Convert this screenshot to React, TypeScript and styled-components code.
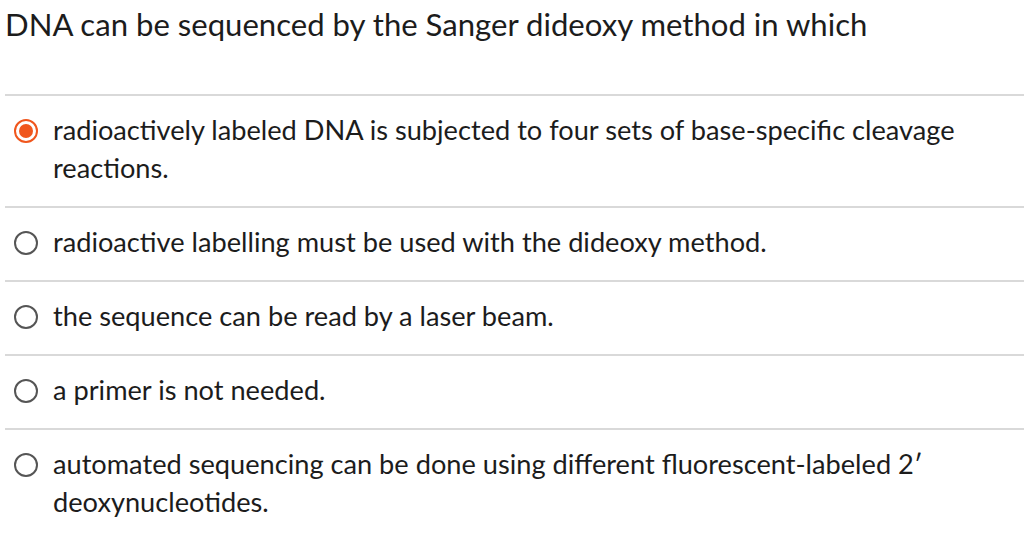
import React from "react";
import styled, { createGlobalStyle } from "styled-components";

const Global = createGlobalStyle`
  html, body { margin: 0; padding: 0; background: #ffffff; }
  body { font-family: Lato, "Open Sans", sans-serif; color: #1c1c1c; }
`;

const Page = styled.div`
  width: 1024px;
  height: 560px;
  overflow: hidden;
  background: #fff;
`;

const Question = styled.h1`
  margin: 0;
  padding: 4px 0 0 5px;
  height: 94px;
  box-sizing: border-box;
  font-size: 31.1px;
  font-weight: 400;
  line-height: 40px;
  letter-spacing: 0;
`;

const List = styled.div`
  display: flex;
  flex-direction: column;
  margin-left: 5px;
`;

const Option = styled.div`
  display: flex;
  align-items: flex-start;
  gap: 15px;
  padding: 15px 0 19px 9px;
  border-top: 2px solid #d9d9d9;
`;

const Radio = styled.span<{ $checked?: boolean }>`
  flex: none;
  box-sizing: border-box;
  width: 24px;
  height: 24px;
  margin-top: 8px;
  border-radius: 50%;
  border: 2px solid ${(p) => (p.$checked ? "#f0561d" : "#555")};
  display: flex;
  align-items: center;
  justify-content: center;
  &::after {
    content: "";
    display: ${(p) => (p.$checked ? "block" : "none")};
    width: 14px;
    height: 14px;
    border-radius: 50%;
    background: #f0561d;
  }
`;

const Label = styled.div`
  font-size: 27.2px;
  line-height: 38px;
  max-width: 940px;
`;

const options = [
  { text: "radioactively labeled DNA is subjected to four sets of base-specific cleavage reactions.", checked: true },
  { text: "radioactive labelling must be used with the dideoxy method." },
  { text: "the sequence can be read by a laser beam." },
  { text: "a primer is not needed." },
  { text: "automated sequencing can be done using different fluorescent-labeled 2\u2032 deoxynucleotides." },
];

export default function App() {
  return (
    <Page>
      <Global />
      <Question>DNA can be sequenced by the Sanger dideoxy method in which</Question>
      <List>
        {options.map((o, i) => (
          <Option key={i}>
            <Radio $checked={o.checked} />
            <Label>{o.text}</Label>
          </Option>
        ))}
      </List>
    </Page>
  );
}
